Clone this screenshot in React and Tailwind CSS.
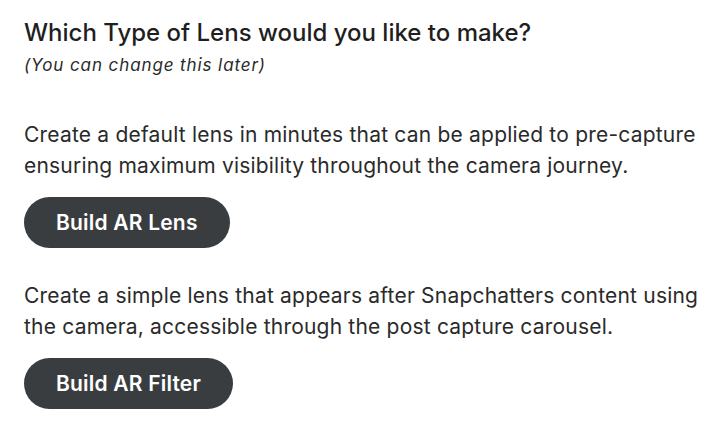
const Option = ({ text, label }) => (
  <div className="flex flex-col items-start">
    <p className="whitespace-nowrap text-[21px] leading-[31px] tracking-[0.2px] text-[#2a2a2a]">{text}</p>
    <button className="mt-[16px] h-[51px] rounded-full bg-[#3a3d40] px-[32px] text-[21px] font-semibold tracking-[0.2px] text-white">
      {label}
    </button>
  </div>
);

export default function App() {
  return (
    <div
      className="min-h-[426px] w-[720px] overflow-hidden bg-white px-[24px] pt-[18px]"
      style={{ fontFamily: 'Inter, "Noto Sans", sans-serif' }}
    >
      <h1 className="text-[24px] leading-[30px] font-medium text-[#1f1f1f]">
        Which Type of Lens would you like to make?
      </h1>
      <p className="mt-[6px] text-[17px] leading-[22px] tracking-[0.9px] italic text-[#2a2a2a]">
        (You can change this later)
      </p>

      <div className="mt-[43px]">
        <Option
          text={
            <>
              Create a default lens in minutes that can be applied to pre-capture
              <br />
              ensuring maximum visibility throughout the camera journey.
            </>
          }
          label="Build AR Lens"
        />
      </div>
      <div className="mt-[32px]">
        <Option
          text={
            <>
              Create a simple lens that appears after Snapchatters content using
              <br />
              the camera, accessible through the post capture carousel.
            </>
          }
          label="Build AR Filter"
        />
      </div>
    </div>
  );
}
